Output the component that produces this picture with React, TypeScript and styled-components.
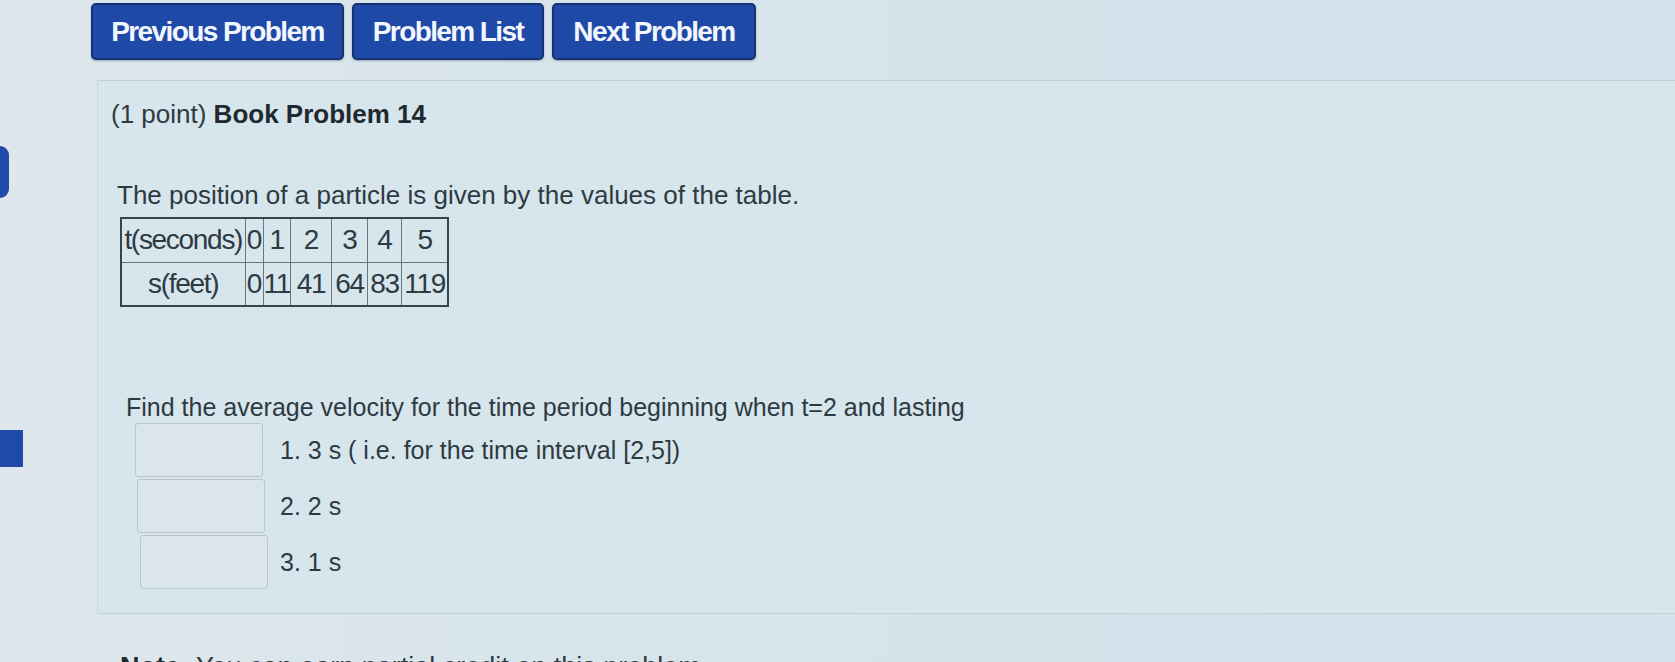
import React from "react";
import styled, { createGlobalStyle } from "styled-components";

const Global = createGlobalStyle`
  html, body { margin: 0; padding: 0; }
  body {
    width: 1675px;
    height: 662px;
    overflow: hidden;
    background: linear-gradient(90deg, #dee7eb 0%, #d8e5eb 30%, #d3e2ea 70%, #d5e4ec 100%);
    font-family: "Liberation Sans", Arial, sans-serif;
    color: #2c3840;
  }
`;

const Page = styled.div`
  position: relative;
  width: 1675px;
  height: 662px;
  overflow: hidden;
`;

const NavBar = styled.div`
  display: flex;
  gap: 8px;
  padding: 3px 0 0 91px;
`;

const NavButton = styled.button<{ $w: number }>`
  width: ${(p) => p.$w}px;
  height: 57px;
  background: #1f49a6;
  border: 2px solid #163270;
  border-radius: 5px;
  color: #f2f6ff;
  font-family: "Liberation Sans", Arial, sans-serif;
  font-size: 28px;
  font-weight: 700;
  letter-spacing: -1.6px;
  padding: 0;
  box-shadow: 0 1px 2px rgba(20, 40, 80, 0.35);
`;

const EdgeTab = styled.div<{ $top: number; $h: number; $w: number; $round: boolean }>`
  position: absolute;
  left: 0;
  top: ${(p) => p.$top}px;
  width: ${(p) => p.$w}px;
  height: ${(p) => p.$h}px;
  background: #1f4aa8;
  border-radius: ${(p) => (p.$round ? "0 10px 10px 0" : "0")};
`;

const Panel = styled.div`
  margin: 20px 0 0 97px;
  height: 534px;
  border-top: 1px solid #c2cfd5;
  border-bottom: 1px solid #c2cfd5;
  border-left: 1px solid #cad7dc;
  background: #d7e5ec;
  padding: 18px 0 0 13px;
  box-sizing: border-box;
`;

const Title = styled.div`
  font-size: 26px;
  line-height: 30px;
  color: #2e3a42;
`;

const Bold = styled.span`
  font-weight: 700;
  color: #1f2a30;
`;

const Para = styled.p<{ $top: number; $left: number; $size: number }>`
  margin: ${(p) => p.$top}px 0 0 ${(p) => p.$left}px;
  font-size: ${(p) => p.$size}px;
  line-height: 30px;
  color: #2e3a42;
`;

const DataTable = styled.table`
  margin: 7px 0 0 9px;
  border-collapse: collapse;
  border: 2px solid #3a4448;
  font-size: 28px;
  letter-spacing: -1.3px;
  color: #2e3a42;
`;

const Cell = styled.td<{ $w: number }>`
  border: 1px solid #6a767c;
  width: ${(p) => p.$w}px;
  height: 44px;
  padding: 0;
  text-align: center;
  box-sizing: border-box;
  white-space: nowrap;
`;

const Answers = styled.div`
  display: flex;
  flex-direction: column;
  gap: 2px;
  margin: 1px 0 0 24px;
`;

const AnswerRow = styled.div<{ $shift: number }>`
  display: flex;
  align-items: center;
  gap: 17px;
  margin-left: ${(p) => p.$shift}px;
`;

const AnswerBox = styled.input`
  width: 128px;
  height: 54px;
  box-sizing: border-box;
  border: 1px solid #bac6cb;
  border-radius: 3px;
  background: #dae6eb;
`;

const AnswerLabel = styled.span<{ $dx: number }>`
  font-size: 25px;
  color: #2e3a42;
  margin-left: ${(p) => p.$dx}px;
`;

const Note = styled.div`
  margin: 38px 0 0 120px;
  font-size: 27px;
  line-height: 30px;
  color: #2e3a42;
  white-space: nowrap;
`;

const tHead = [
  { t: "t(seconds)", w: 124 },
  { t: "0", w: 18 },
  { t: "1", w: 27 },
  { t: "2", w: 41 },
  { t: "3", w: 36 },
  { t: "4", w: 34 },
  { t: "5", w: 47 },
];
const sRow = ["s(feet)", "0", "11", "41", "64", "83", "119"];

const answers = [
  { label: "1. 3 s ( i.e. for the time interval [2,5])", shift: 0 },
  { label: "2. 2 s", shift: 2 },
  { label: "3. 1 s", shift: 5 },
];

export default function App() {
  return (
    <Page>
      <Global />
      <EdgeTab $top={146} $h={52} $w={9} $round={true} />
      <EdgeTab $top={430} $h={37} $w={23} $round={false} />
      <NavBar>
        <NavButton $w={253}>Previous Problem</NavButton>
        <NavButton $w={192}>Problem List</NavButton>
        <NavButton $w={204}>Next Problem</NavButton>
      </NavBar>
      <Panel>
        <Title>
          (1 point) <Bold>Book Problem 14</Bold>
        </Title>
        <Para $top={51} $left={6} $size={26}>
          The position of a particle is given by the values of the table.
        </Para>
        <DataTable>
          <tbody>
            <tr>
              {tHead.map((c) => (
                <Cell key={c.t} $w={c.w}>
                  {c.t}
                </Cell>
              ))}
            </tr>
            <tr>
              {sRow.map((v, i) => (
                <Cell key={i} $w={tHead[i].w}>
                  {v}
                </Cell>
              ))}
            </tr>
          </tbody>
        </DataTable>
        <Para $top={85} $left={15} $size={25}>
          Find the average velocity for the time period beginning when t=2 and lasting
        </Para>
        <Answers>
          {answers.map((a) => (
            <AnswerRow key={a.label} $shift={a.shift}>
              <AnswerBox type="text" />
              <AnswerLabel $dx={-a.shift}>{a.label}</AnswerLabel>
            </AnswerRow>
          ))}
        </Answers>
      </Panel>
      <Note>
        <Bold>Note:</Bold> You can earn partial credit on this problem.
      </Note>
    </Page>
  );
}
